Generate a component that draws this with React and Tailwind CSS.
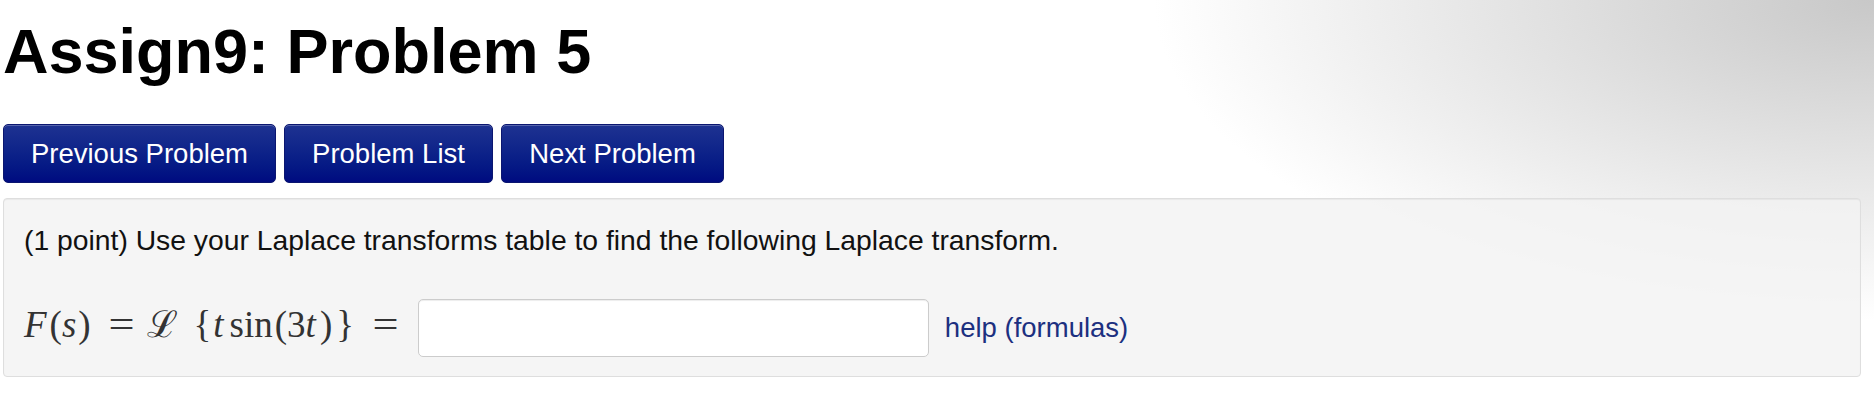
import React from "react";

const NavButton = ({ label, width }) => {
  return (
    <button
      className={`h-[59px] ${width} rounded-[5px] border border-[#0b1670] bg-gradient-to-b from-[#1e3291] to-[#000a80] text-[27.5px] leading-none text-white shadow-[inset_0_1px_0_rgba(255,255,255,0.25)] cursor-pointer`}
    >
      {label}
    </button>
  );
};

// F(s) = L{t sin(3t)} =
const Formula = () => {
  return (
    <span
      className="mb-[8px] flex items-baseline whitespace-nowrap text-[37px] leading-none text-[#333]"
      style={{ fontFamily: '"Liberation Serif", "DejaVu Serif", serif' }}
    >
      <i>F</i>
      <span className="ml-[3px]">(</span>
      <i>s</i>
      <span className="ml-[2px]">)</span>
      <span className="ml-[20px] mr-[15px] scale-x-125">=</span>
      <span className="w-[38px]" style={{ fontFamily: '"DejaVu Serif", serif' }}>ℒ</span>
      <span className="ml-[9px]">{"{"}</span>
      <i className="ml-[2px]">t</i>
      <span className="ml-[6px]">sin</span>
      <span className="ml-[2px]">(3</span>
      <i>t</i>
      <span className="ml-[4px]">)</span>
      <span className="ml-[4px]">{"}"}</span>
      <span className="ml-[21px] mr-[22px] scale-x-125">=</span>
    </span>
  );
};

export default function App() {
  return (
    <div
      className="min-h-[411px] w-full overflow-hidden bg-[radial-gradient(720px_320px_at_100%_0%,#c8c8c8,#ffffff)] text-black"
      style={{ fontFamily: '"Liberation Sans", Arial, sans-serif' }}
    >
      <h1 className="mt-[19px] pl-[3px] text-[63px] font-bold leading-[64px]">
        Assign9: Problem 5
      </h1>

      <div className="mt-[41px] ml-[3px] flex gap-[8px]">
        <NavButton label="Previous Problem" width="w-[273px]" />
        <NavButton label="Problem List" width="w-[209px]" />
        <NavButton label="Next Problem" width="w-[223px]" />
      </div>

      <div className="mt-[15px] ml-[3px] mr-[13px] rounded-[4px] border border-[#dedede] bg-[#f2f2f2]/80 pt-[21px] pb-[19px] pl-[20px] shadow-[inset_0_1px_1px_rgba(0,0,0,0.05)]">
        <p className="text-[28.3px] leading-[40px] text-[#111]">
          (1 point) Use your Laplace transforms table to find the following Laplace transform.
        </p>

        <div className="mt-[39px] flex items-center">
          <Formula />
          <input
            type="text"
            className="h-[58px] w-[511px] rounded-[5px] border border-[#cccccc] bg-white px-3 text-[26px] shadow-[inset_0_1px_1px_rgba(0,0,0,0.075)] outline-none"
          />
          <a href="#" className="ml-[16px] text-[27.5px] leading-none text-[#1c3080]">
            help (formulas)
          </a>
        </div>
      </div>
    </div>
  );
}
